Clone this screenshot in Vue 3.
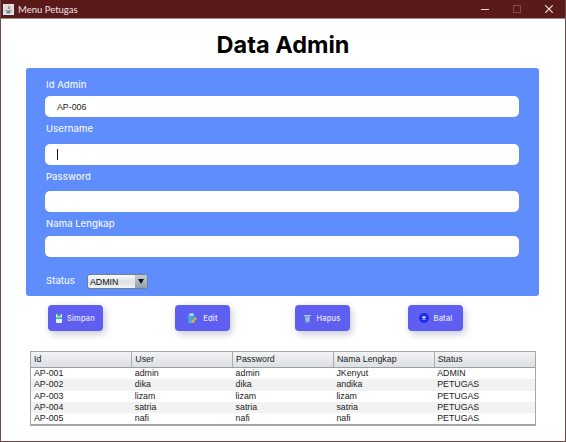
<script setup>
const rows = [
  ['AP-001', 'admin', 'admin', 'JKenyut', 'ADMIN'],
  ['AP-002', 'dika', 'dika', 'andika', 'PETUGAS'],
  ['AP-003', 'lizam', 'lizam', 'lizam', 'PETUGAS'],
  ['AP-004', 'satria', 'satria', 'satria', 'PETUGAS'],
  ['AP-005', 'nafi', 'nafi', 'nafi', 'PETUGAS']
]
const heads = ['Id', 'User', 'Password', 'Nama Lengkap', 'Status']
</script>

<template>
  <div class="window">
    <header class="titlebar">
      <svg class="appicon" width="11" height="11" viewBox="0 0 13 13">
        <rect x="0.5" y="0.5" width="12" height="12" fill="#d9dde2" stroke="#f2f2f2" />
        <path d="M4 9h5l-.6 2H4.6z" fill="#54718f" />
        <path d="M6.5 2c1.2 1.5-1 2.4 0 4M8 3.4c.6 1-.8 1.5 0 2.6" fill="none" stroke="#d0532c" stroke-width="1" />
        <path d="M3 8h7" stroke="#54718f" stroke-width="1" />
      </svg>
      <span class="wintitle">Menu Petugas</span>
      <div class="winctrls">
        <svg width="8" height="8" viewBox="0 0 8 8"><path d="M0 4.5h8" stroke="#e8dcdc" stroke-width="1" /></svg>
        <svg width="8" height="8" viewBox="0 0 8 8"><rect x=".5" y=".5" width="7" height="7" fill="none" stroke="#7d4a4a" /></svg>
        <svg width="8" height="8" viewBox="0 0 8 8"><path d="M.3.3l7.4 7.4M7.7.3L.3 7.7" stroke="#f4eeee" stroke-width="1.1" /></svg>
      </div>
    </header>

    <main class="content">
      <h1 class="heading">Data Admin</h1>

      <section class="panel">
        <label class="lab lab-first">Id Admin</label>
        <div class="field"><span class="val">AP-006</span></div>
        <label class="lab lab-user">Username</label>
        <div class="field"><span class="caret"></span></div>
        <label class="lab">Password</label>
        <div class="field"></div>
        <label class="lab lab-nama">Nama Lengkap</label>
        <div class="field"></div>
        <div class="statusrow">
          <label class="lab-status">Status</label>
          <div class="select">
            <span class="selval">ADMIN</span>
            <span class="arrow"><i></i></span>
          </div>
        </div>
      </section>

      <div class="actions">
        <button class="btn b1">
          <svg width="6" height="9" viewBox="0 0 6 9"><rect width="6" height="9" rx="1" fill="#e3f6f3" /><rect y="3.4" width="6" height="1.5" fill="#2fa7a0" /><rect x="1.2" y="0" width="3.6" height="2.4" fill="#2fa7a0" /></svg>
          <span>Simpan</span>
        </button>
        <button class="btn b2">
          <svg width="11" height="11" viewBox="0 0 11 11"><rect x="1" y="1.5" width="7" height="8.5" rx="1" fill="#4aa3df" /><rect x="2.5" y="0.5" width="4" height="2" fill="#dbe9f5" /><path d="M4.5 9.5l5-4.5" stroke="#f2a92c" stroke-width="2" /></svg>
          <span>Edit</span>
        </button>
        <button class="btn b3">
          <svg width="7" height="9" viewBox="0 0 8 10"><path d="M1 2.5h6l-.6 7H1.6z" fill="#7fa8dc" /><rect x="0" y="1" width="8" height="1.4" fill="#a9cbea" /><path d="M3 4v4M5 4v4" stroke="#d6e6f5" stroke-width=".8" /></svg>
          <span>Hapus</span>
        </button>
        <button class="btn b4">
          <svg width="10" height="10" viewBox="0 0 10 10"><circle cx="5" cy="5" r="5" fill="#1a2fe0" /><path d="M3.5 3.5l3 3M6.5 3.5l-3 3" stroke="#fff" stroke-width="1.2" /></svg>
          <span>Batal</span>
        </button>
      </div>

      <div class="tablewrap">
        <table class="grid">
          <thead>
            <tr><th v-for="h in heads" :key="h">{{ h }}</th></tr>
          </thead>
          <tbody>
            <tr v-for="r in rows" :key="r[0]">
              <td v-for="(c, i) in r" :key="i">{{ c }}</td>
            </tr>
          </tbody>
        </table>
      </div>
    </main>
  </div>
</template>

<style>
html, body { margin: 0; padding: 0; background: #fff; }
</style>

<style scoped>
.window {
  width: 566px;
  height: 442px;
  box-sizing: border-box;
  background: #fff;
  border: 1px solid #6e4a4a;
  border-top: 0;
  overflow: hidden;
  display: flex;
  flex-direction: column;
  font-family: "Inter", "Open Sans", sans-serif;
}
.titlebar {
  height: 18px;
  flex: none;
  background: #5a1a1a;
  border-bottom: 1px solid #a58a8a;
  display: flex;
  align-items: center;
  padding-left: 2px;
  color: #f1e6e6;
}
.appicon { flex: none; }
.wintitle {
  font: 9.5px "Lato", "Open Sans", sans-serif;
  margin-left: 4px;
}
.winctrls {
  margin-left: auto;
  display: flex;
  align-items: center;
  gap: 24px;
  padding-right: 12px;
}
.content { flex: 1; display: flex; flex-direction: column; }
.heading {
  margin: 14px 0 0;
  height: 35px;
  line-height: 24px;
  text-align: center;
  font-size: 23.5px;
  font-weight: 700;
  color: #000;
}
.panel {
  margin: 0 26px 0 25px;
  height: 228px;
  box-sizing: border-box;
  background: #5f8dfb;
  border-radius: 3px;
  padding: 0 20px 0 19px;
  display: flex;
  flex-direction: column;
}
.lab {
  display: block;
  height: 12px;
  line-height: 12px;
  margin: 6px 0 8px 1px;
  font-size: 9.5px;
  font-weight: 500;
  color: #eef3ff;
  letter-spacing: .05px;
}
.lab-first { margin-top: 11px; margin-bottom: 5px; }
.lab-user { margin-bottom: 9px; }
.lab-nama { margin-bottom: 6px; }
.field {
  height: 21px;
  flex: none;
  background: #fff;
  border-radius: 5px;
  display: flex;
  align-items: center;
  padding-left: 12px;
}
.val { font: 8.8px "Liberation Sans", Arial, sans-serif; color: #222; }
.caret { width: 1px; height: 11px; background: #111; }
.statusrow {
  display: flex;
  align-items: center;
  margin-top: 17px;
}
.lab-status {
  width: 41px;
  margin-left: 1px;
  font-size: 9.5px;
  font-weight: 500;
  color: #eef3ff;
  position: relative;
  top: -1px;
}
.select {
  width: 61px;
  height: 15px;
  box-sizing: border-box;
  border: 1px solid #6f7f95;
  border-radius: 3px;
  background: linear-gradient(#f8f9fa, #dcdfe2 55%, #f3f4f5);
  display: flex;
  align-items: center;
  justify-content: space-between;
  overflow: hidden;
}
.selval { font: 8.8px "Liberation Sans", Arial, sans-serif; color: #111; padding-left: 2px; }
.arrow {
  width: 12px;
  height: 100%;
  background: linear-gradient(#c3ccd6, #8fa0b3);
  display: flex;
  align-items: center;
  justify-content: center;
}
.arrow i {
  width: 0;
  height: 0;
  border-left: 3px solid transparent;
  border-right: 3px solid transparent;
  border-top: 5px solid #111;
}
.actions {
  display: flex;
  margin-top: 9px;
  padding-left: 47px;
}
.btn {
  width: 55px;
  height: 26px;
  padding: 0;
  border: 0;
  border-radius: 4px;
  background: #5e5ef0;
  box-shadow: 2px 3px 7px rgba(60, 60, 110, .28);
  color: #e6e8fb;
  font-family: inherit;
  font-size: 7.5px;
  font-weight: 500;
  letter-spacing: .2px;
  display: flex;
  align-items: center;
  justify-content: center;
  gap: 5px;
}
.b2 { margin-left: 72px; }
.b3 { margin-left: 65px; }
.b4 { margin-left: 58px; }
.tablewrap {
  margin: 20px 29px 0;
  width: 506px;
  box-sizing: border-box;
  border: 1px solid #a3a7ab;
  border-bottom-width: 2px;
}
.grid {
  width: 100%;
  border-collapse: collapse;
  table-layout: fixed;
  font: 8.8px "Liberation Sans", Arial, sans-serif;
  color: #222;
}
th {
  height: 15px;
  padding: 0 0 0 3px;
  text-align: left;
  font-weight: 400;
  background: linear-gradient(#f1f3f5, #dcdfe3);
  border-right: 1px solid #a9adb2;
  border-bottom: 1px solid #9a9ea3;
  box-sizing: border-box;
}
th:last-child { border-right: 0; }
td {
  height: 11px;
  line-height: 11px;
  padding: 0 0 0 3px;
  white-space: nowrap;
}
tbody tr:nth-child(2) td { height: 12px; }
tbody tr:nth-child(even) td { background: #f2f2f2; }
</style>
